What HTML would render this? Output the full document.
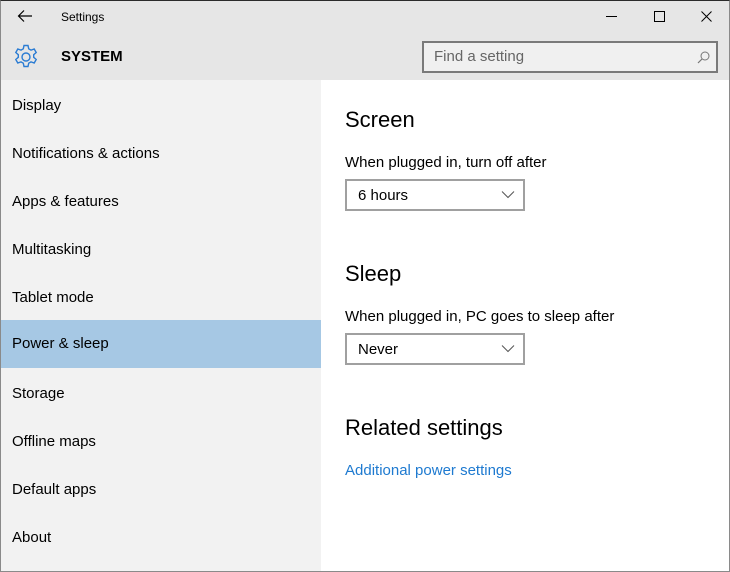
<!DOCTYPE html>
<html><head><meta charset="utf-8"><style>
*{margin:0;padding:0;box-sizing:border-box}
body{width:730px;height:572px;overflow:hidden;font-family:"Liberation Sans",sans-serif;background:#fff;position:relative}
.win{position:absolute;left:0;top:0;width:730px;height:572px;border:1px solid #8a8a8a;border-top:1px solid #2b2b2b;overflow:hidden}
.hdr{position:absolute;left:0;top:0;width:728px;height:79px;background:#e6e6e6}
.side{position:absolute;left:0;top:79px;width:320px;height:493px;background:#f2f2f2}
.item{position:absolute;left:0;width:320px;height:48px;line-height:48px;padding-left:11px;font-size:15px;color:#000}
.sel{background:#a6c8e4}
.t{position:absolute;color:#000}
.dd{position:absolute;left:344px;width:180px;height:32px;border:2px solid #a0a0a0;font-size:15px;line-height:30px;padding-left:11px}
.dd svg{position:absolute;right:8px;top:9px}
</style></head><body><div class="win">
<div class="hdr">
<svg style="position:absolute;left:16px;top:8px" width="16" height="14" viewBox="0 0 16 14"><path d="M15 7H2M7 1.5L1.5 7 7 12.5" fill="none" stroke="#000" stroke-width="1.2"/></svg>
<div class="t" style="left:60px;top:9px;font-size:12px">Settings</div>
<svg style="position:absolute;left:605px;top:15px" width="12" height="2"><rect width="11" height="1" fill="#000"/></svg>
<svg style="position:absolute;left:653px;top:10px" width="12" height="12"><rect x="0.5" y="0.5" width="10" height="10" fill="none" stroke="#000"/></svg>
<svg style="position:absolute;left:700px;top:10px" width="12" height="12"><path d="M0.5 0.5L10.5 10.5M10.5 0.5L0.5 10.5" stroke="#000"/></svg>
<svg style="position:absolute;left:12px;top:43px" width="26" height="26" viewBox="0 0 26 26"><g fill="none" stroke="#2b7cd3" stroke-width="1.4"><circle cx="13" cy="13" r="4"/><path d="M11 1.5h4l.7 3.3 2.3 1.3 3.2-1.1 2 3.5-2.5 2.2v2.6l2.5 2.2-2 3.5-3.2-1.1-2.3 1.3-.7 3.3h-4l-.7-3.3-2.3-1.3-3.2 1.1-2-3.5 2.5-2.2v-2.6L2.8 8.5l2-3.5 3.2 1.1 2.3-1.3z"/></g></svg>
<div class="t" style="left:60px;top:47px;font-size:15px;font-weight:bold">SYSTEM</div>
<div style="position:absolute;left:421px;top:40px;width:296px;height:32px;border:2px solid #7a7a7a;background:#f0f0f0;font-size:15px;color:#666;line-height:28px;padding-left:10px">Find a setting
<svg style="position:absolute;right:6px;top:8px" width="13" height="13" viewBox="0 0 13 13"><circle cx="8" cy="5" r="4" fill="none" stroke="#777"/><path d="M5 8L1 12" stroke="#777" stroke-width="1.2"/></svg></div>
</div>
<div class="side">
<div class="item" style="top:2px">Display</div>
<div class="item" style="top:50px">Notifications &amp; actions</div>
<div class="item" style="top:98px">Apps &amp; features</div>
<div class="item" style="top:146px">Multitasking</div>
<div class="item" style="top:194px">Tablet mode</div>
<div class="item sel" style="top:240px">Power &amp; sleep</div>
<div class="item" style="top:290px">Storage</div>
<div class="item" style="top:338px">Offline maps</div>
<div class="item" style="top:386px">Default apps</div>
<div class="item" style="top:434px">About</div>
</div>
<div class="t" style="left:344px;top:106px;font-size:22px">Screen</div>
<div class="t" style="left:344px;top:153px;font-size:15px">When plugged in, turn off after</div>
<div class="dd" style="top:178px">6 hours<svg width="14" height="9"><path d="M1 1.5l6 6 6-6" fill="none" stroke="#555"/></svg></div>
<div class="t" style="left:344px;top:260px;font-size:22px">Sleep</div>
<div class="t" style="left:344px;top:307px;font-size:15px">When plugged in, PC goes to sleep after</div>
<div class="dd" style="top:332px">Never<svg width="14" height="9"><path d="M1 1.5l6 6 6-6" fill="none" stroke="#555"/></svg></div>
<div class="t" style="left:344px;top:414px;font-size:22px">Related settings</div>
<div class="t" style="left:344px;top:461px;font-size:15px;color:#1e7ad0">Additional power settings</div>
</div></body></html>
